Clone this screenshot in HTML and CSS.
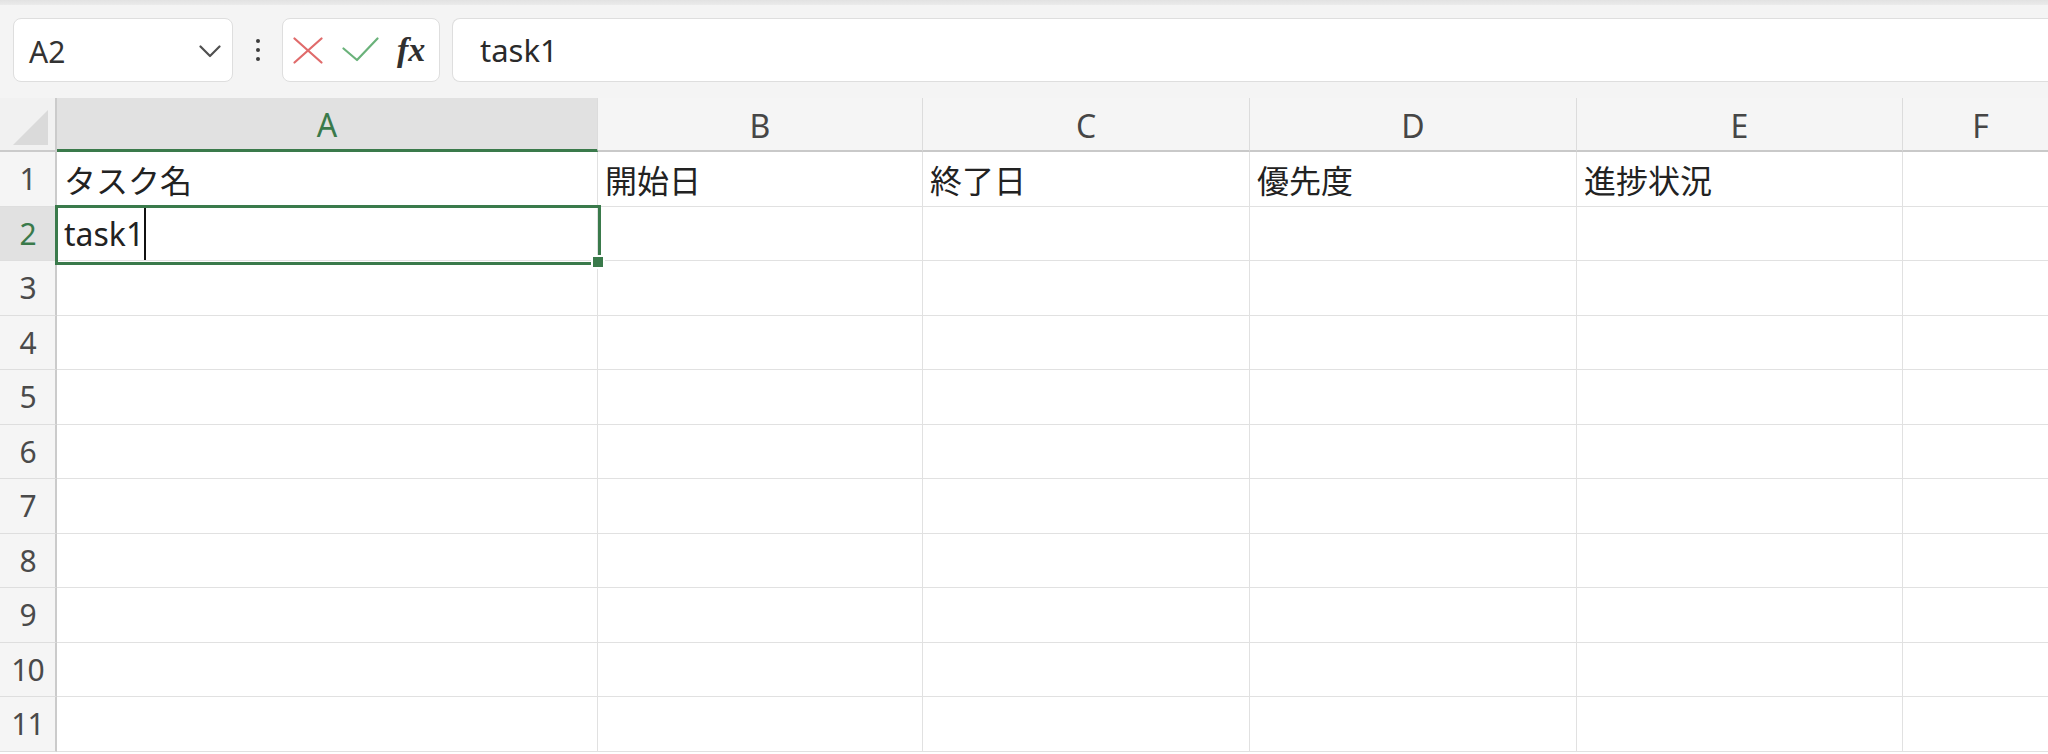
FILE: index.html
```html
<!DOCTYPE html>
<html lang="ja">
<head>
<meta charset="utf-8">
<title>Sheet</title>
<link rel="stylesheet" href="styles.css">
</head>
<body>
<div class="app">
  <div class="ribbon-edge"></div>
  <div class="fbar">
    <div class="namebox">
      <span class="nb-text">A2</span>
      <svg class="chev" width="22" height="13" viewBox="0 0 22 13"><polyline points="1.5,1.5 11,11 20.5,1.5" fill="none" stroke="#505050" stroke-width="2.2" stroke-linecap="round" stroke-linejoin="round"/></svg>
    </div>
    <div class="more"><span class="dot"></span><span class="dot"></span><span class="dot"></span></div>
    <div class="fxbox">
      <svg class="ic-x" width="30" height="27" viewBox="0 0 30 27"><line x1="1.5" y1="1.5" x2="28.5" y2="25.5" stroke="#e06b6b" stroke-width="2.2" stroke-linecap="round"/><line x1="28.5" y1="1.5" x2="1.5" y2="25.5" stroke="#e06b6b" stroke-width="2.2" stroke-linecap="round"/></svg>
      <svg class="ic-ok" width="37" height="25" viewBox="0 0 37 25"><polyline points="1.5,11.5 15,23 35.5,1.5" fill="none" stroke="#6ab27a" stroke-width="2.2" stroke-linecap="round" stroke-linejoin="round"/></svg>
      <span class="fx">fx</span>
    </div>
    <div class="finput">task1</div>
  </div>
  <div class="sheet-wrap">
    <div class="sheet">
      <div class="corner"><div class="tri"></div></div>
      <div class="ch sel">A</div>
      <div class="ch">B</div>
      <div class="ch">C</div>
      <div class="ch">D</div>
      <div class="ch">E</div>
      <div class="ch">F</div>

      <div class="rh">1</div>
      <div class="c">タスク名</div>
      <div class="c">開始日</div>
      <div class="c">終了日</div>
      <div class="c">優先度</div>
      <div class="c">進捗状況</div>
      <div class="c"></div>

      <div class="rh sel">2</div>
      <div class="c"><span>task1</span><span class="caret"></span></div>
      <div class="c"></div><div class="c"></div><div class="c"></div><div class="c"></div><div class="c"></div>

      <div class="rh">3</div>
      <div class="c"></div><div class="c"></div><div class="c"></div><div class="c"></div><div class="c"></div><div class="c"></div>
      <div class="rh">4</div>
      <div class="c"></div><div class="c"></div><div class="c"></div><div class="c"></div><div class="c"></div><div class="c"></div>
      <div class="rh">5</div>
      <div class="c"></div><div class="c"></div><div class="c"></div><div class="c"></div><div class="c"></div><div class="c"></div>
      <div class="rh">6</div>
      <div class="c"></div><div class="c"></div><div class="c"></div><div class="c"></div><div class="c"></div><div class="c"></div>
      <div class="rh">7</div>
      <div class="c"></div><div class="c"></div><div class="c"></div><div class="c"></div><div class="c"></div><div class="c"></div>
      <div class="rh">8</div>
      <div class="c"></div><div class="c"></div><div class="c"></div><div class="c"></div><div class="c"></div><div class="c"></div>
      <div class="rh">9</div>
      <div class="c"></div><div class="c"></div><div class="c"></div><div class="c"></div><div class="c"></div><div class="c"></div>
      <div class="rh">10</div>
      <div class="c"></div><div class="c"></div><div class="c"></div><div class="c"></div><div class="c"></div><div class="c"></div>
      <div class="rh">11</div>
      <div class="c"></div><div class="c"></div><div class="c"></div><div class="c"></div><div class="c"></div><div class="c"></div>
    </div>
    <div class="selection"><div class="handle"></div></div>
  </div>
</div>
</body>
</html>
```
FILE: styles.css
```css
html, body {
  margin: 0;
  padding: 0;
  height: 754px;
  overflow: hidden;
  background: #f4f4f4;
}
.app {
  height: 754px;
  display: flex;
  flex-direction: column;
  font-family: "Noto Sans", "Noto Sans CJK JP", sans-serif;
  color: #242424;
}
.ribbon-edge {
  height: 5px;
  flex: none;
  background: linear-gradient(#e2e2e2, #ebebeb);
}
.fbar {
  flex: none;
  display: flex;
  height: 64px;
  padding: 13px 0 16px 13px;
  background: #f4f4f4;
}
.namebox, .fxbox, .finput {
  box-sizing: border-box;
  height: 64px;
  background: #fff;
  border: 1px solid #dedede;
  border-radius: 8px;
  display: flex;
  align-items: center;
}
.namebox {
  width: 220px;
  padding: 0 11px 0 15px;
  justify-content: space-between;
}
.nb-text {
  font-size: 30px;
  color: #333;
  margin-top: 2px;
}
.chev { margin-top: 2px; }
.more {
  width: 49px;
  display: flex;
  flex-direction: column;
  align-items: center;
  justify-content: center;
  gap: 5px;
}
.dot {
  width: 4px;
  height: 4px;
  border-radius: 50%;
  background: #3c3c3c;
}
.fxbox {
  width: 158px;
  padding-left: 10px;
  margin-right: 12px;
}
.ic-ok { margin-left: 19px; margin-top: -2px; }
.fx {
  margin-left: 18px;
  font-family: "Liberation Serif", "DejaVu Serif", serif;
  font-style: italic;
  font-weight: bold;
  font-size: 34px;
  color: #303030;
  line-height: 1;
}
.finput {
  flex: 1;
  border-right: none;
  border-radius: 8px 0 0 8px;
  padding-left: 27px;
  font-size: 31px;
  color: #2a2a2a;
}
.sheet-wrap {
  flex: 1;
  position: relative;
  overflow: hidden;
  background: #fff;
}
.sheet {
  display: grid;
  grid-template-columns: 57px 541px 325px 327px 327px 326px 156px;
  grid-template-rows: 54px repeat(11, 54.5px);
  font-size: 32px;
}
.sheet > div {
  box-sizing: border-box;
  white-space: nowrap;
}
.corner {
  background: #f1f1f1;
  border-right: 2px solid #cbcbcb;
  border-bottom: 2px solid #cbcbcb;
  padding: 12px 0 0 13px;
}
.tri {
  width: 35px;
  height: 35px;
  background: #dadada;
  clip-path: polygon(100% 0, 100% 100%, 0 100%);
}
.ch {
  background: #f5f5f5;
  border-right: 1px solid #dcdcdc;
  border-bottom: 2px solid #c9c9c9;
  color: #464646;
  display: flex;
  align-items: center;
  justify-content: center;
  padding-top: 2px;
}
.ch.sel {
  background: #e1e1e1;
  border-bottom: 3px solid #3a7a4b;
  color: #3a7a4b;
}
.rh {
  background: #f5f5f5;
  border-right: 2px solid #cbcbcb;
  border-bottom: 1px solid #dedede;
  color: #4a4a4a;
  font-size: 30px;
  letter-spacing: -1px;
  display: flex;
  align-items: center;
  justify-content: center;
}
.rh.sel {
  background: #e1e1e1;
  color: #3a7a4b;
}
.c {
  border-right: 1px solid #e1e1e1;
  border-bottom: 1px solid #e1e1e1;
  display: flex;
  align-items: center;
  padding-left: 7px;
  color: #222;
}
.caret {
  align-self: stretch;
  width: 2px;
  margin-left: 0;
  background: #111;
}
.selection {
  position: absolute;
  left: 55px;
  top: 107px;
  width: 546px;
  height: 60px;
  box-sizing: border-box;
  border: 3px solid #3a7a4b;
  pointer-events: none;
}
.handle {
  position: absolute;
  left: 535px;
  top: 49px;
  width: 10px;
  height: 10px;
  background: #3a7a4b;
  box-shadow: 0 0 0 2px #fff;
}
```
